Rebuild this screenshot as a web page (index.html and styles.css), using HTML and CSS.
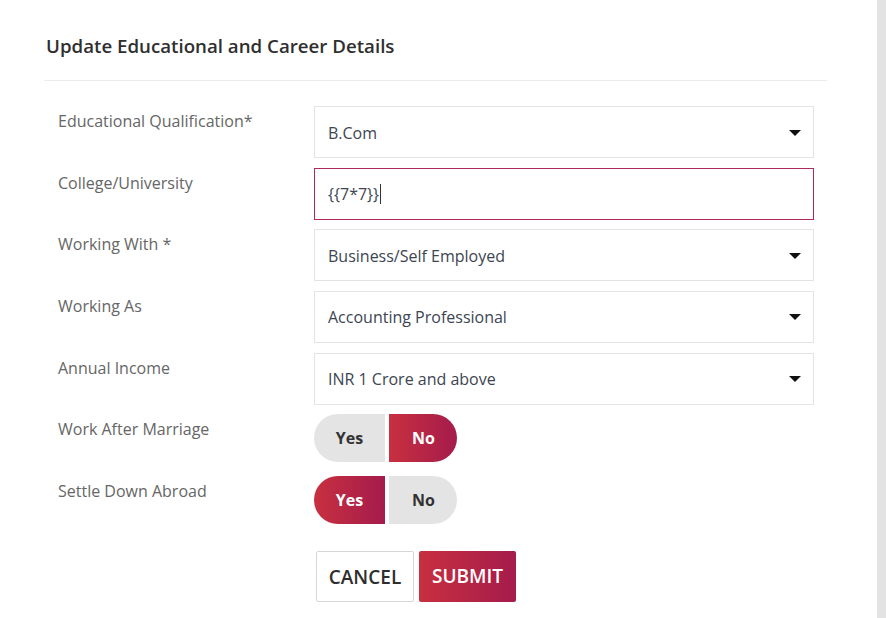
FILE: index.html
```html
<!DOCTYPE html>
<html>
<head>
<meta charset="utf-8">
<link rel="stylesheet" href="styles.css">
</head>
<body>
<div class="page">
  <main class="panel">
    <h2 class="title">Update Educational and Career Details</h2>
    <div class="divider"></div>
    <div class="form">
      <div class="row">
        <div class="label">Educational Qualification*</div>
        <div class="field select"><span>B.Com</span><span class="caret"></span></div>
      </div>
      <div class="row">
        <div class="label">College/University</div>
        <div class="field focused"><span>{{7*7}}</span><span class="cursor"></span></div>
      </div>
      <div class="row">
        <div class="label">Working With *</div>
        <div class="field select"><span>Business/Self Employed</span><span class="caret"></span></div>
      </div>
      <div class="row">
        <div class="label">Working As</div>
        <div class="field select"><span>Accounting Professional</span><span class="caret"></span></div>
      </div>
      <div class="row">
        <div class="label">Annual Income</div>
        <div class="field select"><span>INR 1 Crore and above</span><span class="caret"></span></div>
      </div>
      <div class="row">
        <div class="label">Work After Marriage</div>
        <div class="toggle">
          <div class="opt yes">Yes</div>
          <div class="opt no active">No</div>
        </div>
      </div>
      <div class="row">
        <div class="label">Settle Down Abroad</div>
        <div class="toggle">
          <div class="opt yes active">Yes</div>
          <div class="opt no">No</div>
        </div>
      </div>
      <div class="actions">
        <button class="btn cancel">CANCEL</button>
        <button class="btn submit">SUBMIT</button>
      </div>
    </div>
  </main>
  <div class="scrollbar"></div>
</div>
</body>
</html>
```
FILE: styles.css
```css
* { box-sizing: border-box; }
html, body { margin: 0; padding: 0; }
body {
  font-family: "Open Sans", "Liberation Sans", sans-serif;
  background: #ffffff;
  width: 886px;
  height: 618px;
  overflow: hidden;
}
.page {
  display: flex;
  height: 618px;
}
.panel {
  width: 877px;
  padding: 34px 0 0 0;
}
.scrollbar {
  width: 9px;
  background: #e3e3e3;
}
.title {
  margin: 0 0 0 46px;
  font-size: 18.7px;
  line-height: 24px;
  font-weight: 600;
  color: #2f2f2f;
}
.divider {
  margin: 22px 0 0 44px;
  width: 783px;
  height: 1px;
  background: #ececec;
}
.form {
  padding: 25px 0 0 58px;
  display: flex;
  flex-direction: column;
  gap: 9.67px;
}
.row {
  display: flex;
  min-height: 52px;
}
.label {
  width: 256px;
  padding-top: 4px;
  font-size: 16px;
  line-height: 22px;
  color: #666666;
}
.field {
  width: 500px;
  height: 52px;
  border: 1px solid #e3e3e3;
  display: flex;
  align-items: center;
  padding: 1px 12px 0 13px;
  font-size: 16px;
  color: #3d4552;
}
.field.select {
  justify-content: space-between;
}
.caret {
  width: 0;
  height: 0;
  border-left: 6px solid transparent;
  border-right: 6px solid transparent;
  border-top: 6px solid #111111;
}
.field.focused {
  border-color: #b12a5e;
}
.cursor {
  display: inline-block;
  width: 1px;
  height: 20px;
  background: #333333;
  margin-left: 1px;
}
.toggle {
  display: flex;
  gap: 4px;
  height: 48px;
}
.opt {
  height: 48px;
  display: flex;
  align-items: center;
  justify-content: center;
  font-size: 16px;
  font-weight: 700;
  color: #333333;
  background: #e4e4e4;
}
.opt.yes {
  width: 71px;
  border-radius: 24px 0 0 24px;
}
.opt.no {
  width: 68px;
  border-radius: 0 24px 24px 0;
  padding-left: 1px;
}
.opt.active {
  color: #ffffff;
  background: linear-gradient(to right, #c7303f, #a51b4c);
}
.actions {
  display: flex;
  gap: 5px;
  margin: 13px 0 0 258px;
}
.btn {
  height: 51px;
  font-family: "Open Sans", "Liberation Sans", sans-serif;
  font-size: 19px;
  font-weight: 600;
  border-radius: 2px;
  padding: 0;
  line-height: 51px;
  cursor: pointer;
}
.btn.cancel {
  width: 98px;
  background: #ffffff;
  border: 1px solid #d6d6d6;
  color: #2e2e2e;
}
.btn.submit {
  width: 97px;
  border: none;
  color: #ffffff;
  background: linear-gradient(to right, #c7303f, #a51b4c);
}
```
